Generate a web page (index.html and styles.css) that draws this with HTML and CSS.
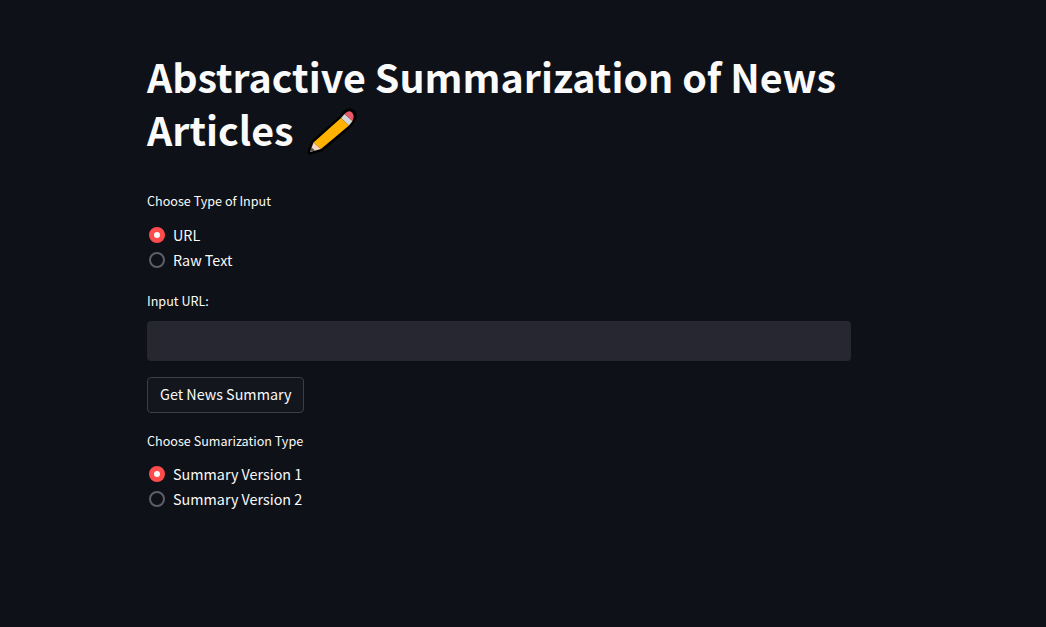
FILE: index.html
```html
<!DOCTYPE html>
<html lang="en">
<head>
<meta charset="utf-8">
<title>Abstractive Summarization of News Articles</title>
<link rel="stylesheet" href="styles.css">
</head>
<body>
<main class="main">
  <h1 class="title">Abstractive Summarization of News Articles
    <svg class="pencil" viewBox="0 0 50 50" width="50" height="50" aria-hidden="true">
      <path d="M3 47 L6.5 37.5 L34 13 L37.5 8.5 Q41.5 4 45.5 7 Q48.5 10.5 46 14.5 L42 20.5 L14 44 Z" fill="#000" stroke="#000" stroke-width="5" stroke-linejoin="round"/>
      <path d="M6.5 37.5 L34 13 L42 20.5 L14 44 Z" fill="#ffb300"/>
      <path d="M6.5 37.5 L3 47 L14 44 Z" fill="#f6d5bd"/>
      <path d="M4.6 42.5 L3 47 L8 45.6 Z" fill="#555"/>
      <path d="M34 13 L37.5 9 L45.5 16 L42 20.5 Z" fill="#d6d6d6"/>
      <path d="M37.5 9 Q41.5 4.5 45 7.5 Q48 10.5 45.5 16 Z" fill="#e8596a"/>
    </svg>
  </h1>

  <div class="field field-first">
    <div class="label">Choose Type of Input</div>
    <div class="radio-group">
      <div class="radio"><span class="dot on"></span><span>URL</span></div>
      <div class="radio"><span class="dot"></span><span>Raw Text</span></div>
    </div>
  </div>

  <div class="field field-input">
    <div class="label">Input URL:</div>
    <div class="input"></div>
  </div>

  <button class="button" type="button">Get News Summary</button>

  <div class="field field-last">
    <div class="label">Choose Sumarization Type</div>
    <div class="radio-group radio-group-tight">
      <div class="radio"><span class="dot on"></span><span>Summary Version 1</span></div>
      <div class="radio"><span class="dot"></span><span>Summary Version 2</span></div>
    </div>
  </div>
</main>
</body>
</html>
```
FILE: styles.css
```css
* { box-sizing: border-box; }
html, body { margin: 0; height: 100%; }
body {
  background: #0e1117;
  color: #fafafa;
  font-family: "Noto Sans CJK SC", "Noto Sans", sans-serif;
  overflow: hidden;
}
.main {
  width: 704px;
  margin-left: 147px;
  padding-top: 49px;
}
.title {
  margin: 0;
  font-size: 39.4px;
  line-height: 53px;
  font-weight: 700;
  color: #fafafa;
}
.pencil { vertical-align: -9px; margin-left: 5px; }
.field-first { margin-top: 34px; }
.label {
  font-size: 12.6px;
  line-height: 24px;
  height: 24px;
}
.radio-group { margin-top: 9px; }
.radio-group-tight { margin-top: 8px; }
.radio {
  display: flex;
  align-items: center;
  gap: 8px;
  font-size: 14.35px;
  line-height: 25px;
  height: 25px;
  padding-left: 2px;
}
.dot {
  width: 16px;
  height: 16px;
  border-radius: 50%;
  border: 2.5px solid #5c5f67;
  background: #0e1117;
}
.dot.on {
  border: 5px solid #ff4b4b;
  background: #fafafa;
}
.field-input { margin-top: 17px; }
.input {
  height: 40px;
  margin-top: 8px;
  background: #262730;
  border-radius: 4px;
}
.button {
  display: block;
  margin-top: 16px;
  height: 36px;
  padding: 0 12px 2px;
  background: #13161d;
  color: #fafafa;
  border: 1px solid #3c3e46;
  border-radius: 4px;
  font: inherit;
  font-size: 14.35px;
  line-height: 24px;
}
.field-last { margin-top: 16px; }
```
